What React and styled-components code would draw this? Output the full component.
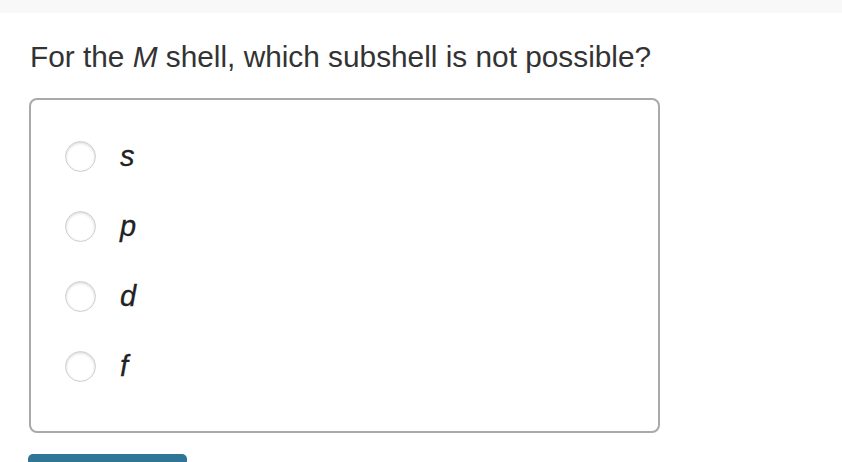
import React from "react";
import styled, { createGlobalStyle } from "styled-components";

const Global = createGlobalStyle`
  html, body { margin: 0; padding: 0; background: #fff; }
  body { font-family: "Liberation Sans", Arial, sans-serif; color: #333; overflow: hidden; }
`;

const TopBar = styled.div`
  height: 13px;
  background: #f8f8f8;
`;

const Content = styled.div`
  padding: 0 28px;
`;

const Question = styled.h1`
  margin: 0;
  padding: 27px 0 0 2px;
  font-size: 29.8px;
  font-weight: normal;
  line-height: 34px;
  color: #333;
`;

const Card = styled.div`
  margin-top: 24px;
  margin-left: 1px;
  width: 631px;
  height: 335px;
  border: 2px solid #a9a9a9;
  border-radius: 8px;
  padding: 41px 0 0 34px;
  box-sizing: border-box;
  display: flex;
  flex-direction: column;
  gap: 40px;
`;

const Option = styled.label`
  display: flex;
  align-items: center;
  height: 30px;
  gap: 24px;
`;

const Radio = styled.span`
  width: 29px;
  height: 29px;
  border-radius: 50%;
  border: 1px solid #d0d0d0;
  background: #fff;
  box-shadow: inset 0 1px 3px rgba(0,0,0,0.18), inset -2px 0 2px rgba(255,255,255,0.9);
  flex: none;
`;

const Label = styled.span`
  font-size: 29px;
  font-style: italic;
  color: #222;
  line-height: 30px;
  -webkit-text-stroke: 0.3px #222;
`;

const Button = styled.div`
  margin-top: 21px;
  width: 159px;
  height: 20px;
  background: #2f7597;
  border-radius: 5px 5px 0 0;
`;

const options = ["s", "p", "d", "f"];

export default function App() {
  return (
    <>
      <Global />
      <TopBar />
      <Content>
        <Question>
          For the <i>M</i> shell, which subshell is not possible?
        </Question>
        <Card>
          {options.map((o) => (
            <Option key={o}>
              <Radio />
              <Label>{o}</Label>
            </Option>
          ))}
        </Card>
        <Button />
      </Content>
    </>
  );
}
